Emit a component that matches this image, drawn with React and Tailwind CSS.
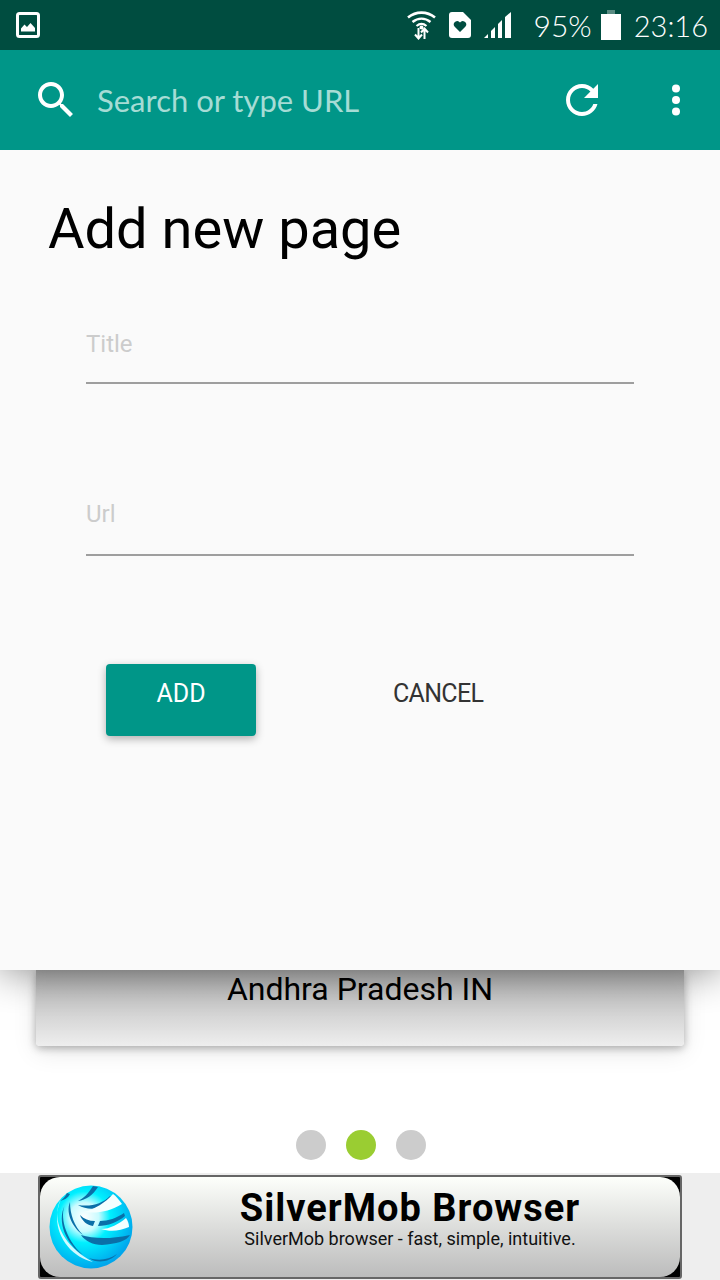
import React from 'react';

const PhotoIcon = () => (
  <svg width="24" height="26" viewBox="0 0 24 26" className="block">
    <rect x="1.5" y="1.5" width="21" height="23" rx="2" fill="none" stroke="#fff" strokeWidth="3" />
    <path d="M5 19.5v-3l3.5-4 2.5 2.5 3.5-4 4.5 5v3.5z" fill="#fff" />
  </svg>
);

const WifiIcon = () => (
  <svg width="29" height="30" viewBox="0 0 29 30" fill="none" stroke="#fff" className="block">
    <path d="M1 7.5C9 1 20 1 28 7.5" strokeWidth="2.6" />
    <path d="M5.5 12C11 7.5 18 7.5 23.5 12" strokeWidth="2.4" />
    <path d="M9.5 16c3-2.5 7-2.5 10 0" strokeWidth="2.2" />
    <circle cx="14.5" cy="17.5" r="2" fill="#fff" stroke="none" />
    <path d="M11.5 18v10M8 24.5l3.5 4 3.5-4M17.5 29V19M14 22.5l3.5-4 3.5 4" strokeWidth="2" />
  </svg>
);

const SimIcon = () => (
  <svg width="22" height="26" viewBox="0 0 22 26" className="block">
    <path d="M3 0h11l8 8v15a3 3 0 0 1-3 3H3a3 3 0 0 1-3-3V3a3 3 0 0 1 3-3z" fill="#fff" />
    <path d="M11 20l-5.500-5.500a3.400 3.400 0 0 1 5.500-4 3.400 3.400 0 0 1 5.500 4z" fill="#004d40" />
  </svg>
);

const SignalIcon = () => (
  <svg width="28" height="28" viewBox="0 0 28 28" fill="#fff" className="block">
    <path d="M0 27l4-4v4zM7 27v-7l4-4v11zM14 27V13l4-4v18zM21 27V6l6-5v26z" />
  </svg>
);

const BatteryIcon = () => (
  <svg width="20" height="30" viewBox="0 0 20 30" className="block">
    <path d="M6 0h8v4h6v5H0V4h6z" fill="#fff" fillOpacity="0.35" />
    <rect y="4" width="20" height="26" fill="#fff" />
  </svg>
);

const SearchIcon = () => (
  <svg width="48" height="48" viewBox="0 0 24 24" fill="#fff" className="block">
    <path d="M15.5 14h-.79l-.28-.27C15.41 12.59 16 11.11 16 9.5 16 5.91 13.09 3 9.5 3S3 5.91 3 9.5 5.91 16 9.5 16c1.61 0 3.09-.59 4.23-1.57l.27.28v.79l5 4.99L20.49 19l-4.99-5zm-6 0C7.01 14 5 11.99 5 9.5S7.01 5 9.5 5 14 7.01 14 9.5 11.99 14 9.5 14z" />
  </svg>
);

const RefreshIcon = () => (
  <svg width="48" height="48" viewBox="0 0 24 24" fill="#fff" className="block">
    <path d="M17.65 6.35C16.2 4.9 14.21 4 12 4c-4.42 0-7.99 3.58-7.99 8s3.57 8 7.99 8c3.73 0 6.84-2.55 7.73-6h-2.08c-.82 2.33-3.04 4-5.65 4-3.31 0-6-2.69-6-6s2.69-6 6-6c1.66 0 3.14.69 4.22 1.78L13 11h7V4l-2.35 2.35z" />
  </svg>
);

const MoreIcon = () => (
  <svg width="10" height="32" viewBox="0 0 10 32" fill="#fff" className="block">
    <circle cx="5" cy="4.500" r="4" />
    <circle cx="5" cy="16" r="4" />
    <circle cx="5" cy="27.500" r="4" />
  </svg>
);

const GlobeLogo = () => (
  <svg width="84" height="84" viewBox="0 0 84 84" className="block">
    <defs>
      <radialGradient id="globeFill" cx="0.42" cy="0.38" r="0.62">
        <stop offset="0" stopColor="#ffffff" />
        <stop offset="0.28" stopColor="#c8fbff" />
        <stop offset="0.5" stopColor="#00f0ff" />
        <stop offset="1" stopColor="#00a6ec" />
      </radialGradient>
    </defs>
    <circle cx="42" cy="42" r="41.500" fill="url(#globeFill)" />
    <g fill="#0a6fa8">
      <path d="M44 1c-5 8-9 12-15 15 8-1 15-6 20-14z" />
      <path d="M29 20c13 2 24-1 32-9l3 2C55 24 41 27 29 20z" />
      <path d="M31 30c4 4 9 6 15 6l-2 5c-6-1-11-5-13-11zM51 36c8 0 17-3 24-8l1 3c-7 6-17 10-27 10z" />
      <path d="M32 50c11 3 26 5 49 0-3 6-14 9-28 10-9 0-17-4-21-10z" />
      <path d="M16 20c-5 10-1 33 18 50-16-10-27-33-18-50z" />
      <path d="M21 17c0 12 4 24 13 33-9-6-18-21-13-33z" />
      <path d="M40 73c9 3 20 2 28-4-7 8-20 10-28 4z" />
      <path d="M18 8c-2 4-4 6-7 8 4-1 8-3 10-7z" />
    </g>
    <g fill="#f4ffff">
      <path d="M12 14C3 30 9 58 44 77 20 72-1 44 12 14z" fillOpacity="0.85" />
      <path d="M64 9c3 2 6 6 9 10-12 7-24 10-38 8 11-3 21-9 29-18z" />
      <path d="M77 33c2 3 3 6 3 9-9 4-19 5-28 2 9 0 18-5 25-11z" />
    </g>
  </svg>
);

const Field = ({ label, className }) => (
  <div className={`mx-[86px] h-[60px] border-b-2 border-[#9e9e9e] text-[24px] leading-[36px] text-[#cccccc] ${className}`}>
    {label}
  </div>
);

export default function App() {
  return (
    <div className="w-[720px] h-[1280px] flex flex-col bg-white overflow-hidden font-['Roboto',sans-serif]">
      <div className="relative z-20 h-[50px] flex items-center pl-4 pr-3 bg-[#004d40] text-white">
        <PhotoIcon />
        <div className="ml-auto flex items-center">
          <WifiIcon />
          <div className="ml-[13px]"><SimIcon /></div>
          <div className="ml-[13px]"><SignalIcon /></div>
          <span className="ml-[22px] text-[30px] leading-none font-['Lato',sans-serif] font-light">95%</span>
          <div className="ml-[9px]"><BatteryIcon /></div>
          <span className="ml-[13px] text-[29px] leading-none font-['Lato',sans-serif] font-light">23:16</span>
        </div>
      </div>

      <div className="relative z-20 h-[100px] flex items-center pl-[32px] pr-[39px] bg-[#009688]">
        <SearchIcon />
        <span className="ml-[17px] text-[31px] font-['Lato',sans-serif] text-[#a6dcd5]">Search or type URL</span>
        <div className="ml-auto flex items-center gap-[65px]">
          <RefreshIcon />
          <MoreIcon />
        </div>
      </div>

      <div className="relative z-10 h-[820px] bg-[#fafafa] shadow-[0_0_40px_rgba(0,0,0,0.5)]">
        <h1 className="ml-[48px] mt-[44px] text-[56px] leading-[70px] text-black">Add new page</h1>
        <Field label="Title" className="mt-[60px] pt-[2px]" />
        <Field label="Url" className="mt-[112px]" />
        <div className="mt-[108px] ml-[106px] flex items-start">
          <button className="w-[150px] h-[72px] pb-[13px] rounded bg-[#009688] text-[25px] text-white shadow-[0_3px_8px_rgba(0,0,0,0.3)]">ADD</button>
          <button className="ml-[137px] mt-[15px] text-[25px] leading-[30px] text-[#333333] tracking-[-0.7px]">CANCEL</button>
        </div>
      </div>

      <div className="mx-[36px] h-[76px] rounded-b bg-gradient-to-b from-[#b4b4b4] to-[#eeeeee] text-center text-[32px] leading-[38px] text-black shadow-[0_2px_8px_rgba(0,0,0,0.3),0_6px_24px_rgba(0,0,0,0.1)]">
        Andhra Pradesh IN
      </div>

      <div className="mt-[84px] flex justify-center gap-5 pl-[2px]">
        <span className="w-[30px] h-[30px] rounded-full bg-[#cccccc]" />
        <span className="w-[30px] h-[30px] rounded-full bg-[#9acd32]" />
        <span className="w-[30px] h-[30px] rounded-full bg-[#cccccc]" />
      </div>

      <div className="mt-[13px] h-[107px] pt-[2px] px-[38px] bg-[#eeeeee]">
        <div className="h-[104px] rounded-[3px] border-2 border-[#666666] bg-black">
          <div className="relative h-full flex flex-col items-center pl-[100px] rounded-[20px] bg-gradient-to-b from-[#fdfffb] to-[#bcbcbc]">
            <div className="absolute left-[9px] top-[8px]"><GlobeLogo /></div>
            <div className="mt-[11px] text-[38px] leading-[40px] font-bold tracking-[1px] text-black">SilverMob Browser</div>
            <div className="text-[18px] leading-[22px] text-[#111111]">SilverMob browser - fast, simple, intuitive.</div>
          </div>
        </div>
      </div>
    </div>
  );
}
